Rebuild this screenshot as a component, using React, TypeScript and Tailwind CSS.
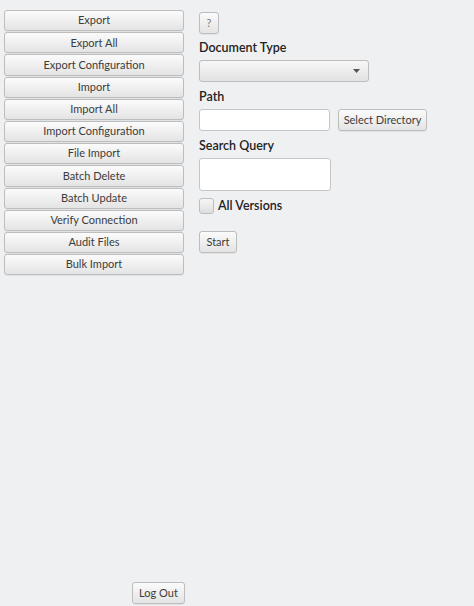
import React from 'react';

const actions = [
  'Export',
  'Export All',
  'Export Configuration',
  'Import',
  'Import All',
  'Import Configuration',
  'File Import',
  'Batch Delete',
  'Batch Update',
  'Verify Connection',
  'Audit Files',
  'Bulk Import',
];

const btn =
  "flex items-center justify-center rounded-[3px] border border-[#bdbdbd] bg-gradient-to-b from-[#fbfbfb] to-[#e4e4e4] text-[11px] text-[#3c3c3c] shadow-[0_1px_0_rgba(0,0,0,0.05)]";

export default function App() {
  return (
    <div className="flex h-[606px] w-[474px] bg-[#eff0f2] font-['Lato','Open_Sans',sans-serif]">
      {/* Action list */}
      <div className="flex w-[185px] flex-col pl-[4px] pt-[10px] pb-[2px]">
        <div className="flex flex-col gap-[1px]">
          {actions.map((a, i) => (
            <button
              key={a}
              type="button"
              className={`${btn} h-[21.2px] w-[180px] ${
                i === 0 ? 'from-[#dcdcdc] to-[#cbcbcb] border-[#adadad]' : ''
              }`}
            >
              {a}
            </button>
          ))}
        </div>
        <div className="mt-auto flex justify-end">
          <button type="button" className={`${btn} h-[22px] w-[53px] text-[11.5px]`}>
            Log Out
          </button>
        </div>
      </div>

      {/* Form */}
      <div className="ml-[14px] flex flex-col items-start pt-[12px] text-[#222]">
        <button type="button" className={`${btn} h-[22px] w-[20px] text-[10px] text-[#777]`}>
          ?
        </button>

        <label className="mt-[5px] h-[17px] text-[12.5px] leading-[17px] font-semibold">Document Type</label>
        <div className="mt-[4px] flex h-[22px] w-[170px] items-center justify-end rounded-[3px] border border-[#bdbdbd] bg-gradient-to-b from-[#f7f7f7] to-[#e2e2e2] pr-[8px]">
          <svg width="7" height="4" viewBox="0 0 7 4">
            <path d="M0 0h7L3.5 4z" fill="#555" />
          </svg>
        </div>

        <label className="mt-[6px] h-[17px] text-[12.5px] leading-[17px] font-semibold">Path</label>
        <div className="mt-[4px] flex items-center gap-[8px]">
          <div className="h-[22px] w-[131px] rounded-[3px] border border-[#c6c6c6] bg-white" />
          <button type="button" className={`${btn} h-[22px] w-[89px]`}>
            Select Directory
          </button>
        </div>

        <label className="mt-[6px] h-[17px] text-[12.5px] leading-[17px] font-semibold">Search Query</label>
        <div className="mt-[4px] h-[33px] w-[132px] rounded-[3px] border border-[#c6c6c6] bg-white" />

        <div className="mt-[6px] flex items-center gap-[4px]">
          <div className="h-[16px] w-[15px] rounded-[3px] border border-[#bdbdbd] bg-gradient-to-b from-[#f7f7f7] to-[#dedede]" />
          <span className="text-[12.5px] font-semibold">All Versions</span>
        </div>

        <button type="button" className={`${btn} mt-[15px] h-[22px] w-[38px]`}>
          Start
        </button>
      </div>
    </div>
  );
}
